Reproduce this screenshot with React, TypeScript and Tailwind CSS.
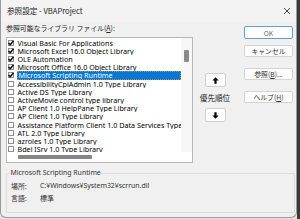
import React from "react";

const libs = [
  { name: "Visual Basic For Applications", on: true },
  { name: "Microsoft Excel 16.0 Object Library", on: true },
  { name: "OLE Automation", on: true },
  { name: "Microsoft Office 16.0 Object Library", on: true },
  { name: "Microsoft Scripting Runtime", on: true, sel: true },
  { name: "AccessibilityCplAdmin 1.0 Type Library", on: false },
  { name: "Active DS Type Library", on: false },
  { name: "ActiveMovie control type library", on: false },
  { name: "AP Client 1.0 HelpPane Type Library", on: false },
  { name: "AP Client 1.0 Type Library", on: false },
  { name: "Assistance Platform Client 1.0 Data Services Type Library", on: false },
  { name: "ATL 2.0 Type Library", on: false },
  { name: "azroles 1.0 Type Library", on: false },
  { name: "Bdel ISrv 1.0 Type Library", on: false },
];

const jp = { fontFamily: '"Noto Sans CJK JP", "Noto Sans", sans-serif' };
const latin = { fontFamily: '"Noto Sans", "Noto Sans CJK JP", sans-serif' };

function CheckBox({ on }: { on: boolean }) {
  return (
    <div className="w-[6px] h-[6px] shrink-0 bg-white border border-[#8f8f8f] flex items-center justify-center">
      {on && (
        <svg width="6" height="6" viewBox="0 0 6 6" className="shrink-0">
          <path d="M0.6 3 L2.3 4.8 L5.4 1" fill="none" stroke="#000" strokeWidth="1.4" />
        </svg>
      )}
    </div>
  );
}

function Btn({ children, def }: { children: React.ReactNode; def?: boolean }) {
  return (
    <div
      className={
        "w-[49px] flex items-center justify-center rounded-[2px] bg-[#fdfdfd] text-[6.8px] leading-[8px] " +
        (def ? "h-[13px] border border-[#5d9fd8] text-[#6d6d6d]" : "h-[12px] border border-[#d4d4d4] text-[#333]")
      }
      style={jp}
    >
      {children}
    </div>
  );
}

function Arrow({ up }: { up?: boolean }) {
  return (
    <div className="w-[21px] h-[14px] bg-[#fdfdfd] border border-[#d0d0d0] rounded-[2px] flex items-center justify-center">
      <svg width="7" height="7" viewBox="0 0 7 7" className={up ? "" : "rotate-180"}>
        <path d="M3.5 0.3 L6.6 3.6 L4.6 3.6 L4.6 6.8 L2.4 6.8 L2.4 3.6 L0.4 3.6 Z" fill="#000" />
      </svg>
    </div>
  );
}

export default function App() {
  return (
    <div className="w-[300px] h-[219px] flex bg-[#e4e4e4] overflow-hidden">
      <div className="w-[297px] h-[218px] flex flex-col bg-[#f0f0f0] border border-[#9a9a9a] border-t-0 rounded-b-[6px] overflow-hidden">
        {/* title bar */}
        <div className="h-[22px] shrink-0 flex items-center bg-[#f3f3f3] pl-[6px] pr-[5px]">
          <span className="text-[7.6px] text-[#222]" style={jp}>参照設定 - VBAProject</span>
          <svg width="8" height="8" viewBox="0 0 8 8" className="ml-auto">
            <path d="M1 1 L7 7 M7 1 L1 7" stroke="#333" strokeWidth="0.9" />
          </svg>
        </div>

        <div className="flex">
          {/* list column */}
          <div className="ml-[5px] w-[187px] flex flex-col">
            <div className="mt-[2px] h-[8px] flex items-center text-[6.9px] text-[#222] leading-[8px]" style={jp}>
              参照可能なライブラリ ファイル(<span className="underline">A</span>):
            </div>
            <div className="mt-[5px] h-[126px] border border-[#b8b8b8] bg-white flex flex-col">
              <div className="h-[114px] flex">
                <div className="flex-1 overflow-hidden pt-[0.6px]">
                  {libs.map((l) => (
                    <div key={l.name} className="h-[8.2px] flex items-center">
                      <div className="ml-[1px]">
                        <CheckBox on={l.on} />
                      </div>
                      <div
                        className={
                          "ml-[2.5px] flex-1 h-[8.2px] flex items-center pl-[1px] whitespace-nowrap overflow-hidden text-[7.2px] leading-[8px] " +
                          (l.sel ? "bg-[#0078d7] text-white border border-dotted border-[#c08a4a]" : "text-black")
                        }
                        style={latin}
                      >
                        {l.name}
                      </div>
                    </div>
                  ))}
                </div>
                <div className="w-[11px] bg-[#f7f7f7] flex justify-center">
                  <div className="mt-[12px] w-[5px] h-[12px] bg-[#8a8a8a] rounded-[1px]" />
                </div>
              </div>
              <div className="h-[10px] flex items-center">
                <div className="ml-[11px] w-[74px] h-[4px] bg-[#858585] rounded-[1px]" />
              </div>
            </div>
          </div>

          {/* priority column */}
          <div className="w-[44px] flex flex-col items-center">
            <div className="mt-[51px]">
              <Arrow up />
            </div>
            <div className="mt-[7px] h-[8px] flex items-center text-[7.6px] text-[#222] leading-[8px]" style={jp}>
              優先順位
            </div>
            <div className="mt-[6px]">
              <Arrow />
            </div>
          </div>

          {/* buttons column */}
          <div className="ml-[7px] flex flex-col">
            <div className="mt-[4px]">
              <Btn def>OK</Btn>
            </div>
            <div className="mt-[6px]">
              <Btn>キャンセル</Btn>
            </div>
            <div className="mt-[11px]">
              <Btn>
                参照(<span className="underline">B</span>)...
              </Btn>
            </div>
            <div className="mt-[11px]">
              <Btn>
                ヘルプ(<span className="underline">H</span>)
              </Btn>
            </div>
          </div>
        </div>

        {/* info group */}
        <fieldset className="ml-[5px] mt-[6px] w-[289px] h-[44px] border border-[#dcdcdc] rounded-[2px] px-[4px]">
          <legend className="ml-[-1px] px-[0.5px] text-[6.9px] text-[#333] leading-[8px]" style={latin}>
            Microsoft Scripting Runtime
          </legend>
          <div className="mt-[5px] h-[8px] flex items-center text-[6.9px] text-[#333] leading-[8px]" style={jp}>
            <span className="w-[29px]">場所:</span>
            <span style={latin}>C:¥Windows¥System32¥scrrun.dll</span>
          </div>
          <div className="mt-[4px] h-[8px] flex items-center text-[6.9px] text-[#333] leading-[8px]" style={jp}>
            <span className="w-[29px]">言語:</span>
            <span>標準</span>
          </div>
        </fieldset>
      </div>
      <div className="w-[3px] h-full bg-[#3a3a3a]" />
    </div>
  );
}
